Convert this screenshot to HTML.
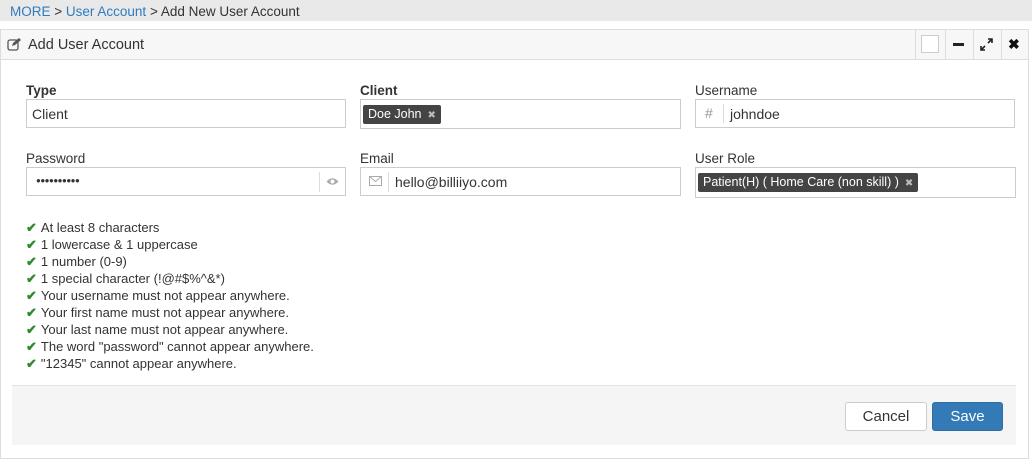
<!DOCTYPE html>
<html><head><style>
*{box-sizing:border-box;margin:0;padding:0}
body{width:1032px;height:442px;background:#fff;font-family:"Liberation Sans",sans-serif;font-size:13.5px;color:#333;position:relative;overflow:hidden}
.abs{position:absolute}
.bc{left:0;top:0;width:1032px;height:21px;background:#e9e9e9;padding:4px 0 0 10px;font-size:13.5px}
.bc a{color:#2f7bbf;text-decoration:none}
.panel{left:0;top:29px;width:1029px;height:430px;border:1px solid #ddd}
.hdr{left:0;top:29px;width:1029px;height:31px;background:#f7f7f7;border:1px solid #ddd}
.lbl{font-size:13.5px;color:#333}
.b{font-weight:bold}
.inp{border:1px solid #ccc;height:29px;background:#fff;font-size:14px}
.tag{position:absolute;background:#444;color:#fff;font-size:12.5px;padding:2px 5px;border-radius:2px;top:5px;left:2px;height:19px;line-height:15px}
.tag span{color:#bbb;margin-left:6px;font-size:10px}
.chk{left:26px;font-size:13px;line-height:17px}
.chk div:before{content:"✔";color:#2e8b2e;margin-right:4px;font-weight:bold}
.foot{left:12px;top:385px;width:1004px;height:60px;background:#f5f5f5;border-top:1px solid #e3e3e3}
.btn{height:29px;border-radius:3px;font-size:15px;text-align:center;line-height:27px}
</style></head><body>
<div class="abs bc"><a>MORE</a> &gt; <a>User Account</a> &gt; Add New User Account</div>
<div class="abs panel"></div>
<div class="abs hdr"></div>
<svg class="abs" style="left:7px;top:38px" width="14" height="13" viewBox="0 0 14 13"><rect x="1" y="2" width="10" height="10" rx="2" fill="none" stroke="#555" stroke-width="1.3"/><path d="M5 8l1-3 6-5 2 2-6 5z" fill="#555"/></svg>
<div class="abs" style="left:28px;top:37px;font-size:14.5px">Add User Account</div>
<div class="abs" style="left:915px;top:30px;width:1px;height:29px;background:#ddd"></div>
<div class="abs" style="left:945px;top:30px;width:1px;height:29px;background:#ddd"></div>
<div class="abs" style="left:973px;top:30px;width:1px;height:29px;background:#ddd"></div>
<div class="abs" style="left:1001px;top:30px;width:1px;height:29px;background:#ddd"></div>
<div class="abs" style="left:921px;top:35px;width:18px;height:18px;border:1px solid #ccc;background:#fff"></div>
<div class="abs" style="left:953px;top:43px;width:11px;height:3px;background:#222"></div>
<svg class="abs" style="left:980px;top:38px" width="13" height="13" viewBox="0 0 13 13"><path d="M8 1h4v4M12 1L8 5M5 12H1V8M1 12l4-4" fill="none" stroke="#222" stroke-width="1.6"/></svg>
<div class="abs" style="left:1008px;top:36px;font-size:14px;font-weight:bold;color:#111">✖</div>

<div class="abs lbl b" style="left:26px;top:83px">Type</div>
<div class="abs inp" style="left:26px;top:99px;width:320px;padding:6px 5px">Client</div>
<div class="abs lbl b" style="left:360px;top:83px">Client</div>
<div class="abs inp" style="left:360px;top:99px;width:321px;height:30px"><div class="tag">Doe John<span>✖</span></div></div>
<div class="abs lbl" style="left:695px;top:83px">Username</div>
<div class="abs inp" style="left:695px;top:99px;width:320px"><span class="abs" style="left:9px;top:5px;color:#999;font-size:14px">#</span><span class="abs" style="left:27px;top:4px;width:1px;height:19px;background:#ddd"></span><span class="abs" style="left:34px;top:6px">johndoe</span></div>

<div class="abs lbl" style="left:26px;top:151px">Password</div>
<div class="abs inp" style="left:26px;top:167px;width:320px"><span class="abs" style="left:9px;top:8px;font-size:8px;letter-spacing:-0.5px">●●●●●●●●●●</span><span class="abs" style="left:292px;top:4px;width:1px;height:20px;background:#ddd"></span><svg class="abs" style="left:299px;top:9px" width="13" height="9" viewBox="0 0 13 9"><path d="M0.5 4.5Q6.5-2 12.5 4.5Q6.5 11 0.5 4.5z" fill="#aaa"/><circle cx="6.5" cy="4.5" r="2" fill="#fff"/></svg></div>
<div class="abs lbl" style="left:360px;top:151px">Email</div>
<div class="abs inp" style="left:360px;top:167px;width:321px"><svg class="abs" style="left:8px;top:8px" width="13" height="10" viewBox="0 0 13 10"><rect x=".5" y=".5" width="12" height="9" fill="none" stroke="#aaa"/><path d="M.5 .5l6 5 6-5" fill="none" stroke="#aaa"/></svg><span class="abs" style="left:27px;top:4px;width:1px;height:20px;background:#ddd"></span><span class="abs" style="left:34px;top:6px">hello@billiiyo.com</span></div>
<div class="abs lbl" style="left:695px;top:151px">User Role</div>
<div class="abs inp" style="left:695px;top:167px;width:321px;height:31px"><div class="tag">Patient(H) ( Home Care (non skill) )<span>✖</span></div></div>

<div class="abs chk" style="top:219px">
<div>At least 8 characters</div><div>1 lowercase &amp; 1 uppercase</div><div>1 number (0-9)</div><div>1 special character (!@#$%^&amp;*)</div><div>Your username must not appear anywhere.</div><div>Your first name must not appear anywhere.</div><div>Your last name must not appear anywhere.</div><div>The word "password" cannot appear anywhere.</div><div>"12345" cannot appear anywhere.</div>
</div>

<div class="abs foot"></div>
<div class="abs btn" style="left:845px;top:402px;width:82px;border:1px solid #ccc;background:#fff;color:#333">Cancel</div>
<div class="abs btn" style="left:932px;top:402px;width:71px;background:#337ab7;border:1px solid #2e6da4;color:#fff">Save</div>
</body></html>
